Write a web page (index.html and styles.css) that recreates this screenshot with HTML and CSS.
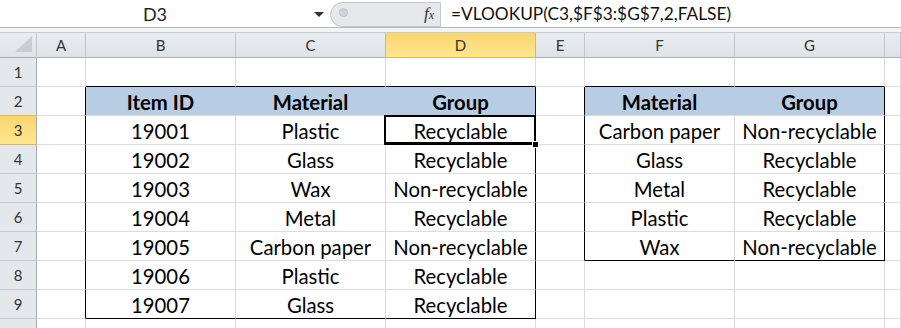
FILE: index.html
```html
<!DOCTYPE html>
<html lang="en">
<head>
    <meta charset="UTF-8">
    <meta name="viewport" content="width=device-width, initial-scale=1.0">
    <title>VLOOKUP - Recyclable</title>
    <link rel="stylesheet" href="styles.css">
</head>
<body>
    <div class="formula-bar">
        <div class="name-box">D3</div>
        <div class="name-arrow"></div>
        <div class="fx-box">
            <span class="grip"></span>
            <span class="fx">f<sub>x</sub></span>
        </div>
        <div class="formula">=VLOOKUP(C3,$F$3:$G$7,2,FALSE)</div>
    </div>
    <div class="strip"></div>

    <div class="sheet">
        <!-- column letters -->
        <div class="row col-heads">
            <div class="corner">
                <svg width="18" height="17" viewBox="0 0 18 17"><polygon points="17,0 17,16 0,16" fill="#c9cdd3"/></svg>
            </div>
            <div class="ch">A</div>
            <div class="ch">B</div>
            <div class="ch">C</div>
            <div class="ch active">D</div>
            <div class="ch">E</div>
            <div class="ch">F</div>
            <div class="ch">G</div>
            <div class="ch last"></div>
        </div>

        <div class="row">
            <div class="rh">1</div>
            <div class="c"></div>
            <div class="c bb"></div>
            <div class="c bb"></div>
            <div class="c bb"></div>
            <div class="c"></div>
            <div class="c bb"></div>
            <div class="c bb"></div>
            <div class="c"></div>
        </div>

        <div class="row">
            <div class="rh">2</div>
            <div class="c br"></div>
            <div class="c hd">Item ID</div>
            <div class="c hd">Material</div>
            <div class="c hd br">Group</div>
            <div class="c br"></div>
            <div class="c hd">Material</div>
            <div class="c hd br">Group</div>
            <div class="c"></div>
        </div>

        <div class="row">
            <div class="rh active">3</div>
            <div class="c br"></div>
            <div class="c">19001</div>
            <div class="c">Plastic</div>
            <div class="c br selected">Recyclable</div>
            <div class="c br"></div>
            <div class="c">Carbon paper</div>
            <div class="c br">Non-recyclable</div>
            <div class="c"></div>
        </div>

        <div class="row">
            <div class="rh">4</div>
            <div class="c br"></div>
            <div class="c">19002</div>
            <div class="c">Glass</div>
            <div class="c br">Recyclable</div>
            <div class="c br"></div>
            <div class="c">Glass</div>
            <div class="c br">Recyclable</div>
            <div class="c"></div>
        </div>

        <div class="row">
            <div class="rh">5</div>
            <div class="c br"></div>
            <div class="c">19003</div>
            <div class="c">Wax</div>
            <div class="c br">Non-recyclable</div>
            <div class="c br"></div>
            <div class="c">Metal</div>
            <div class="c br">Recyclable</div>
            <div class="c"></div>
        </div>

        <div class="row">
            <div class="rh">6</div>
            <div class="c br"></div>
            <div class="c">19004</div>
            <div class="c">Metal</div>
            <div class="c br">Recyclable</div>
            <div class="c br"></div>
            <div class="c">Plastic</div>
            <div class="c br">Recyclable</div>
            <div class="c"></div>
        </div>

        <div class="row">
            <div class="rh">7</div>
            <div class="c br"></div>
            <div class="c">19005</div>
            <div class="c">Carbon paper</div>
            <div class="c br">Non-recyclable</div>
            <div class="c br"></div>
            <div class="c bb">Wax</div>
            <div class="c br bb">Non-recyclable</div>
            <div class="c"></div>
        </div>

        <div class="row">
            <div class="rh">8</div>
            <div class="c br"></div>
            <div class="c">19006</div>
            <div class="c">Plastic</div>
            <div class="c br">Recyclable</div>
            <div class="c"></div>
            <div class="c"></div>
            <div class="c"></div>
            <div class="c"></div>
        </div>

        <div class="row">
            <div class="rh">9</div>
            <div class="c br"></div>
            <div class="c bb">19007</div>
            <div class="c bb">Glass</div>
            <div class="c br bb">Recyclable</div>
            <div class="c"></div>
            <div class="c"></div>
            <div class="c"></div>
            <div class="c"></div>
        </div>

        <div class="row">
            <div class="rh"></div>
            <div class="c"></div>
            <div class="c"></div>
            <div class="c"></div>
            <div class="c"></div>
            <div class="c"></div>
            <div class="c"></div>
            <div class="c"></div>
            <div class="c"></div>
        </div>
    </div>
</body>
</html>
```

FILE: styles.css
```css
body {
    margin: 0;
    font-family: Lato, "Open Sans", sans-serif;
    background: #fff;
    color: #000;
    overflow: hidden;
}

/* formula bar */
.formula-bar {
    display: flex;
    align-items: center;
    height: 28px;
    box-sizing: border-box;
    border-bottom: 1px solid #b7bbc1;
}
.name-box {
    width: 310px;
    text-align: center;
    font-size: 18px;
    color: #222;
}
.name-arrow {
    width: 0;
    height: 0;
    margin: 1px 6px 0 4px;
    border-left: 5px solid transparent;
    border-right: 5px solid transparent;
    border-top: 5px solid #333;
}
.fx-box {
    display: flex;
    align-items: center;
    justify-content: space-between;
    width: 111px;
    height: 25px;
    box-sizing: border-box;
    margin-top: 1px;
    padding: 0 6px 0 8px;
    background: #e6e8eb;
    border: 1px solid #c3c6cb;
    border-radius: 13px 0 0 13px;
}
.grip {
    width: 7px;
    height: 7px;
    border-radius: 50%;
    background: #d1d4d8;
    border: 1px solid #bfc2c6;
    margin-bottom: 4px;
}
.fx {
    font-family: "Liberation Serif", serif;
    font-style: italic;
    font-size: 17px;
    color: #333;
}
.fx sub {
    font-size: 12px;
    vertical-align: 0;
}
.formula {
    padding-left: 10px;
    font-size: 17.3px;
    color: #111;
}
.strip {
    height: 5px;
    box-sizing: border-box;
    background: #f2f3f5;
    border-bottom: 1px solid #c9ccd1;
}

/* grid */
.row {
    display: grid;
    grid-template-columns: 37px 49px 150px 150px 150px 49px 150px 150px 1fr;
    height: 29px;
}
.row > div {
    box-sizing: border-box;
    display: flex;
    align-items: flex-end;
    justify-content: center;
    border-right: 1px solid #dadcdf;
    border-bottom: 1px solid #dadcdf;
}
.c {
    font-size: 20.3px;
    line-height: 24px;
    padding-bottom: 1px;
}

.col-heads {
    height: 25px;
}
.col-heads > div {
    align-items: center;
    background: linear-gradient(#e9ecf0, #dfe3e8);
    border-right: 1px solid #c3c7cd;
    border-bottom: 1px solid #a9aeb6;
    font-size: 15px;
    color: #333;
}
.corner {
    justify-content: flex-end !important;
    align-items: flex-end !important;
    padding: 0 3px 4px 0;
}
.col-heads > .active {
    background: linear-gradient(#f9d56f, #fee78f);
    border-right-color: #e2b650;
    border-bottom-color: #e2b650;
    border-left: 1px solid #e2b650;
    margin-left: -1px;
}
.rh {
    align-items: center !important;
    background: #e4e7ec;
    border-right: 1px solid #a9aeb6 !important;
    border-bottom-color: #c6cad0 !important;
    font-size: 15px;
    color: #333;
}
.rh.active {
    background: linear-gradient(#f9d56f, #fee78f);
    border-bottom-color: #e2b650 !important;
    border-top: 1px solid #e2b650;
    margin-top: -1px;
}

/* table formatting */
.hd {
    background: #b8cce4;
    font-weight: bold;
    border-right-color: #b8cce4 !important;
}
.c.br {
    border-right-color: #000;
}
.c.bb {
    border-bottom-color: #000;
}
.hd.br {
    border-right-color: #000 !important;
}

/* active cell */
.selected {
    position: relative;
}
.selected::before {
    content: "";
    position: absolute;
    top: -1px;
    left: -2px;
    right: -1px;
    bottom: -1px;
    border: 2px solid #000;
    border-bottom-width: 3px;
}
.selected::after {
    content: "";
    position: absolute;
    right: -4px;
    bottom: -4px;
    width: 5px;
    height: 5px;
    background: #000;
    border: 1px solid #fff;
}
```
